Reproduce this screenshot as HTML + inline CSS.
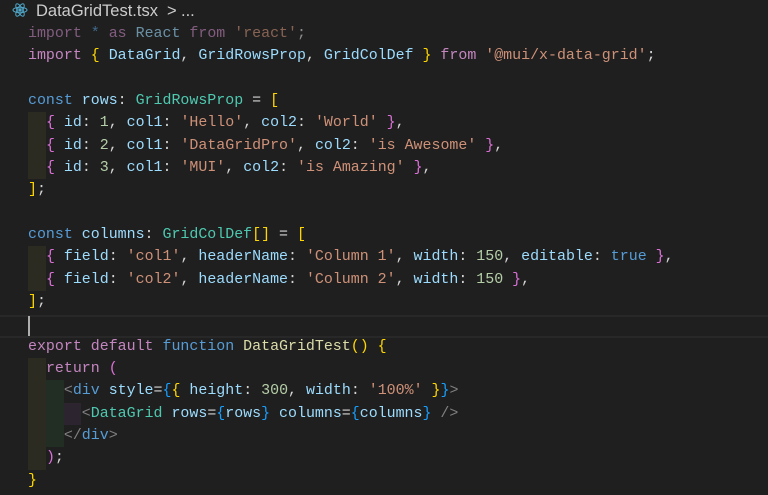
<!DOCTYPE html>
<html><head><meta charset="utf-8"><style>
html,body{margin:0;padding:0;background:#1f1f1f;width:768px;height:495px;overflow:hidden}
.crumb{position:absolute;left:0;top:0;height:22px;font:16.5px "Liberation Sans",sans-serif;color:#cccccc;}
.crumb span{position:absolute;top:2px;white-space:nowrap}
.code{position:absolute;left:28px;top:23px;font:14.95px/22.33px "Liberation Mono",monospace;color:#d4d4d4}
.l{height:22.33px;position:relative;white-space:pre}
.g1,.g2,.g3{position:absolute;top:0;height:22.33px;width:17.8px}
.g1{left:0;background:#2c2b21}
.g2{left:17.8px;background:#222d23}
.g3{left:35.6px;background:#2c2530}
.t{position:relative}
.cur{position:absolute;left:0;top:315px;width:768px;height:19px;border-top:2px solid #282828;border-bottom:2px solid #282828}
.caret{position:absolute;left:28px;top:316px;width:2px;height:20px;background:#aeafad}
.k{color:#c586c0}.b{color:#569cd6}.v{color:#9cdcfe}.ty{color:#4ec9b0}.s{color:#ce9178}.n{color:#b5cea8}.f{color:#dcdcaa}
.y{color:#ffd700}.p{color:#da70d6}.bl{color:#179fff}.gt{color:#808080}
.dim{opacity:.6}
</style></head><body>
<div class="cur"></div>
<div class="caret"></div>
<div class="crumb">
<svg style="position:absolute;left:12px;top:2px" width="16" height="16" viewBox="0 0 16 16" fill="none" stroke="#4fa7c9" stroke-width="1"><ellipse cx="8" cy="8" rx="7" ry="2.7"/><ellipse cx="8" cy="8" rx="7" ry="2.7" transform="rotate(60 8 8)"/><ellipse cx="8" cy="8" rx="7" ry="2.7" transform="rotate(120 8 8)"/><circle cx="8" cy="8" r="1.2" fill="#4fa7c9"/></svg>
<span style="left:36px">DataGridTest.tsx</span><span style="left:167px">&gt;</span><span style="left:181px">...</span>
</div>
<div class="code"><div class="l dim"><span class="k">import</span> <span class="b">*</span> <span class="k">as</span> <span class="v">React</span> <span class="k">from</span> <span class="s">'react'</span>;</div><div class="l"><span class="k">import</span> <span class="y">{</span> <span class="v">DataGrid</span>, <span class="v">GridRowsProp</span>, <span class="v">GridColDef</span> <span class="y">}</span> <span class="k">from</span> <span class="s">'@mui/x-data-grid'</span>;</div><div class="l"> </div><div class="l"><span class="b">const</span> <span class="v">rows</span>: <span class="ty">GridRowsProp</span> = <span class="y">[</span></div><div class="l"><i class="g1"></i><span class="t">  <span class="p">{</span> <span class="v">id</span>: <span class="n">1</span>, <span class="v">col1</span>: <span class="s">'Hello'</span>, <span class="v">col2</span>: <span class="s">'World'</span> <span class="p">}</span>,</span></div><div class="l"><i class="g1"></i><span class="t">  <span class="p">{</span> <span class="v">id</span>: <span class="n">2</span>, <span class="v">col1</span>: <span class="s">'DataGridPro'</span>, <span class="v">col2</span>: <span class="s">'is Awesome'</span> <span class="p">}</span>,</span></div><div class="l"><i class="g1"></i><span class="t">  <span class="p">{</span> <span class="v">id</span>: <span class="n">3</span>, <span class="v">col1</span>: <span class="s">'MUI'</span>, <span class="v">col2</span>: <span class="s">'is Amazing'</span> <span class="p">}</span>,</span></div><div class="l"><span class="y">]</span>;</div><div class="l"> </div><div class="l"><span class="b">const</span> <span class="v">columns</span>: <span class="ty">GridColDef</span><span class="y">[]</span> = <span class="y">[</span></div><div class="l"><i class="g1"></i><span class="t">  <span class="p">{</span> <span class="v">field</span>: <span class="s">'col1'</span>, <span class="v">headerName</span>: <span class="s">'Column 1'</span>, <span class="v">width</span>: <span class="n">150</span>, <span class="v">editable</span>: <span class="b">true</span> <span class="p">}</span>,</span></div><div class="l"><i class="g1"></i><span class="t">  <span class="p">{</span> <span class="v">field</span>: <span class="s">'col2'</span>, <span class="v">headerName</span>: <span class="s">'Column 2'</span>, <span class="v">width</span>: <span class="n">150</span> <span class="p">}</span>,</span></div><div class="l"><span class="y">]</span>;</div><div class="l"> </div><div class="l"><span class="k">export</span> <span class="k">default</span> <span class="b">function</span> <span class="f">DataGridTest</span><span class="y">()</span> <span class="y">{</span></div><div class="l"><i class="g1"></i><span class="t">  <span class="k">return</span> <span class="p">(</span></span></div><div class="l"><i class="g1"></i><i class="g2"></i><span class="t">    <span class="gt">&lt;</span><span class="b">div</span> <span class="v">style</span>=<span class="bl">{</span><span class="y">{</span> <span class="v">height</span>: <span class="n">300</span>, <span class="v">width</span>: <span class="s">'100%'</span> <span class="y">}</span><span class="bl">}</span><span class="gt">&gt;</span></span></div><div class="l"><i class="g1"></i><i class="g2"></i><i class="g3"></i><span class="t">      <span class="gt">&lt;</span><span class="ty">DataGrid</span> <span class="v">rows</span>=<span class="bl">{</span><span class="v">rows</span><span class="bl">}</span> <span class="v">columns</span>=<span class="bl">{</span><span class="v">columns</span><span class="bl">}</span> <span class="gt">/&gt;</span></span></div><div class="l"><i class="g1"></i><i class="g2"></i><span class="t">    <span class="gt">&lt;/</span><span class="b">div</span><span class="gt">&gt;</span></span></div><div class="l"><i class="g1"></i><span class="t">  <span class="p">)</span>;</span></div><div class="l"><span class="y">}</span></div></div>
</body></html>
